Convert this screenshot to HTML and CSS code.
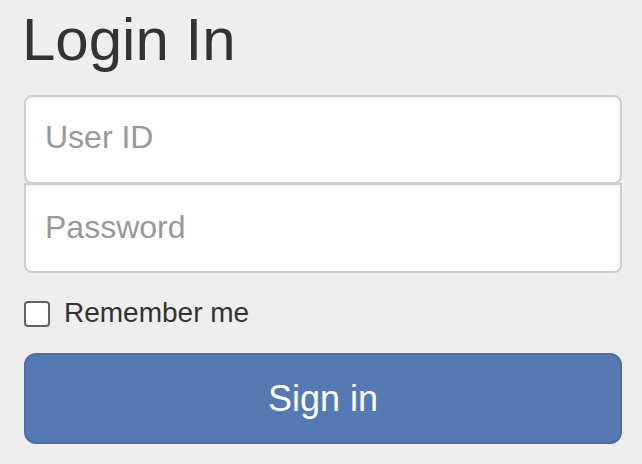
FILE: index.html
```html
<!DOCTYPE html>
<html lang="en">
<head>
<meta charset="utf-8">
<title>Login In</title>
<link rel="stylesheet" href="styles.css">
</head>
<body>
<div class="container">
  <form class="form-signin">
    <h2 class="form-signin-heading">Login In</h2>
    <input type="text" class="form-control first" placeholder="User ID">
    <input type="password" class="form-control last" placeholder="Password">
    <label class="checkbox">
      <input type="checkbox" class="check" value="remember-me">
      <span class="check-label">Remember me</span>
    </label>
    <button class="btn-primary" type="button">Sign in</button>
  </form>
</div>
</body>
</html>
```
FILE: styles.css
```css
html, body {
  margin: 0;
  padding: 0;
  background: #eeeeee;
  font-family: "Liberation Sans", Arial, sans-serif;
  color: #333333;
}

.container {
  padding: 7px 0 0 24px;
}

.form-signin {
  width: 598px;
  display: flex;
  flex-direction: column;
}

.form-signin-heading {
  margin: 0 0 22px -2px;
  font-size: 60px;
  line-height: 66px;
  font-weight: 400;
  color: #333333;
}

.form-control {
  box-sizing: border-box;
  width: 598px;
  margin: 0;
  border: 2px solid #cdcdcd;
  border-radius: 8px;
  background: #ffffff;
  font-family: "Liberation Sans", Arial, sans-serif;
  font-size: 32px;
  color: #555555;
  outline: none;
  box-shadow: inset 0 2px 2px rgba(0, 0, 0, 0.05);
}

.form-control::placeholder {
  color: #999999;
  opacity: 1;
}

.form-control.first {
  position: relative;
  z-index: 1;
  height: 89px;
  padding: 0 19px 5px 19px;
}

.form-control.last {
  height: 90px;
  margin-top: -1px;
  padding: 0 19px 2px 19px;
  border-top-left-radius: 0;
  border-top-right-radius: 0;
}

.checkbox {
  display: flex;
  align-items: center;
  margin-top: 28px;
  height: 26px;
}

.check {
  appearance: none;
  -webkit-appearance: none;
  box-sizing: border-box;
  width: 26px;
  height: 26px;
  margin: 0 14px 0 0;
  border: 2px solid #626262;
  border-radius: 4px;
  background: #ffffff;
}

.check-label {
  font-size: 28px;
  line-height: 32px;
  color: #333333;
  position: relative;
  top: -1px;
}

.btn-primary {
  box-sizing: border-box;
  width: 598px;
  height: 91px;
  margin-top: 26px;
  padding: 0;
  border: 2px solid #4a6ea7;
  border-radius: 12px;
  background: #5479b3;
  color: #ffffff;
  font-family: "Liberation Sans", Arial, sans-serif;
  font-size: 36px;
  cursor: pointer;
}
```
